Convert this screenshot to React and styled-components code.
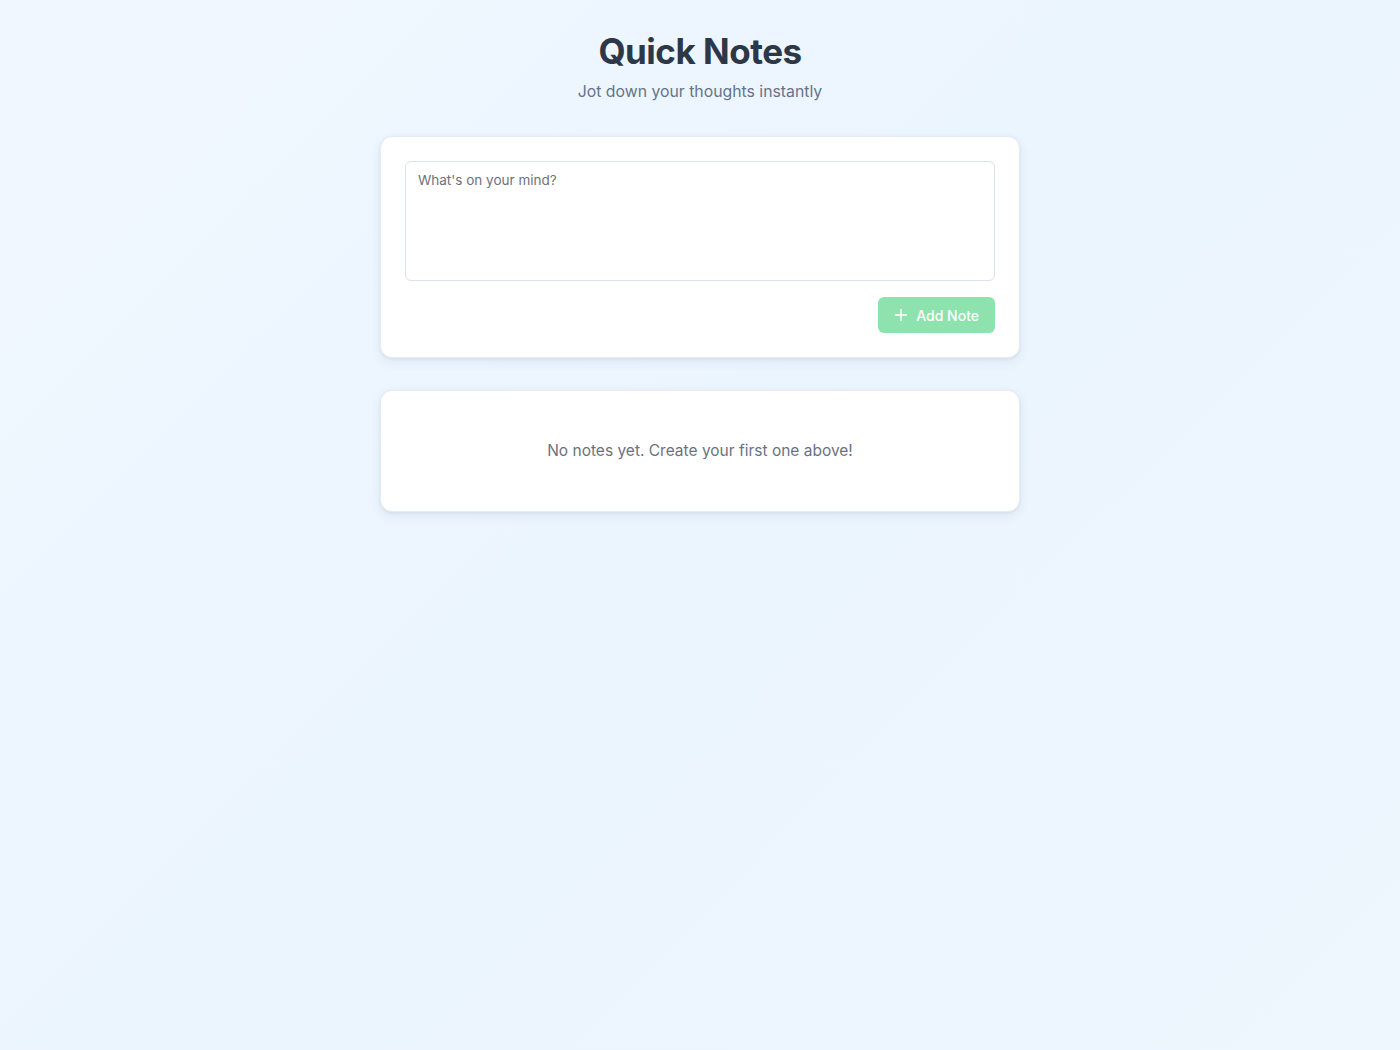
import React, { useState } from "react";
import styled, { createGlobalStyle } from "styled-components";

const Global = createGlobalStyle`
  html, body { margin: 0; padding: 0; }
  body {
    font-family: Inter, "Noto Sans", sans-serif;
    background: linear-gradient(135deg, #f0f7ff 0%, #ebf5fe 50%, #eef6fe 100%);
    min-height: 1050px;
  }
  * { box-sizing: border-box; }
`;

const Page = styled.div`
  min-height: 1050px;
  padding: 30px 16px 40px;
`;

const Container = styled.div`
  max-width: 640px;
  margin: 0 auto;
  display: flex;
  flex-direction: column;
`;

const Header = styled.header`
  text-align: center;
  margin-bottom: 32px;
`;

const Title = styled.h1`
  margin: 0;
  font-size: 35px;
  line-height: 43px;
  font-weight: 700;
  letter-spacing: -0.5px;
  color: #2d3748;
`;

const Subtitle = styled.p`
  margin: 7px 0 0;
  font-size: 15.8px;
  line-height: 24px;
  color: #64748b;
`;

const Card = styled.section`
  background: #fff;
  border: 1px solid #e6ebf1;
  border-radius: 12px;
  box-shadow: 0 4px 12px rgba(30, 60, 100, 0.08), 0 1px 3px rgba(0, 0, 0, 0.06);
  padding: ${(p) => p.$pad || "23px"};
  margin-bottom: ${(p) => p.$mb || "0"};
`;

const TextArea = styled.textarea`
  display: block;
  width: 100%;
  height: 120px;
  resize: none;
  border: 1px solid #dde2e8;
  border-radius: 6px;
  padding: 8px 12px;
  font-family: inherit;
  font-size: 13.5px;
  line-height: 20px;
  color: #334155;
  outline: none;
  &::placeholder { color: #6b7280; }
`;

const Actions = styled.div`
  display: flex;
  justify-content: flex-end;
  margin-top: 16px;
`;

const Button = styled.button`
  display: inline-flex;
  align-items: center;
  gap: 8px;
  height: 36px;
  padding: 0 16px;
  border: none;
  border-radius: 6px;
  background: #8ee2ad;
  color: #fff;
  font-family: inherit;
  font-size: 14px;
  font-weight: 500;
  cursor: not-allowed;
`;

const Empty = styled.p`
  margin: 0;
  text-align: center;
  font-size: 15.5px;
  line-height: 24px;
  color: #6b7280;
`;

export default function App() {
  const [text, setText] = useState("");
  return (
    <>
      <Global />
      <Page>
        <Container>
          <Header>
            <Title>Quick Notes</Title>
            <Subtitle>Jot down your thoughts instantly</Subtitle>
          </Header>
          <Card $pad="24px" $mb="32px">
            <TextArea
              placeholder="What's on your mind?"
              value={text}
              onChange={(e) => setText(e.target.value)}
            />
            <Actions>
              <Button disabled={!text.trim()}>
                <svg width="14" height="14" viewBox="0 0 14 14" fill="none" stroke="#fff" strokeWidth="1.6" strokeLinecap="round">
                  <path d="M7 1.5v11M1.5 7h11" />
                </svg>
                Add Note
              </Button>
            </Actions>
          </Card>
          <Card $pad="48px 24px">
            <Empty>No notes yet. Create your first one above!</Empty>
          </Card>
        </Container>
      </Page>
    </>
  );
}
